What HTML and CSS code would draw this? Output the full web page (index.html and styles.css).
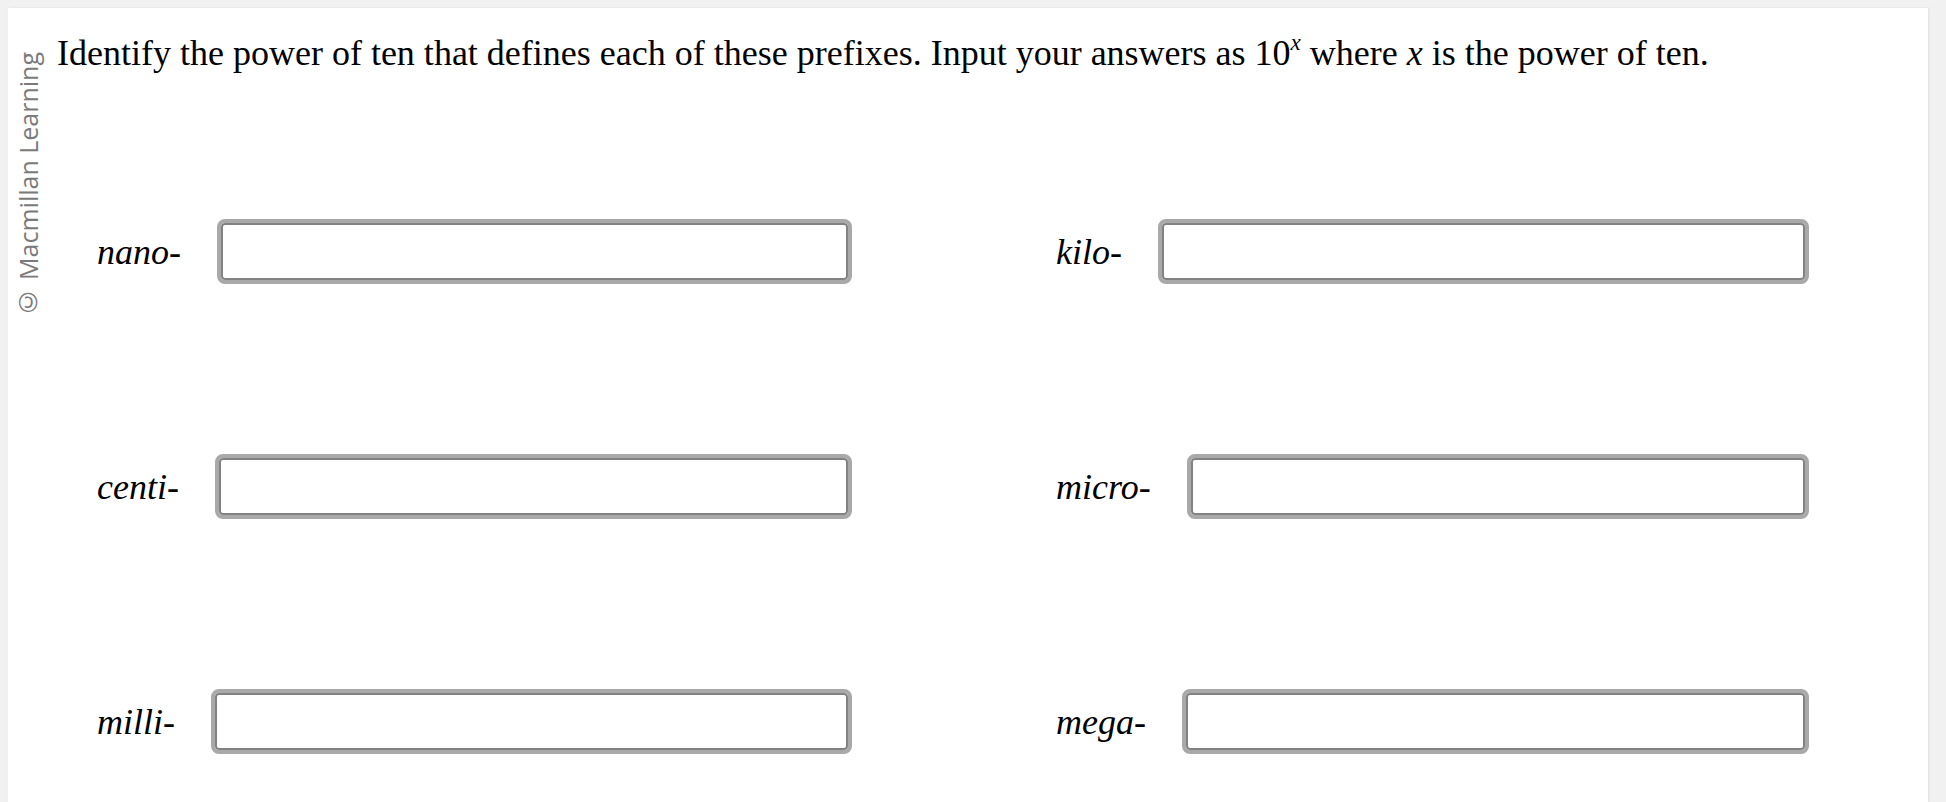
FILE: index.html
```html
<!DOCTYPE html>
<html lang="en">
<head>
<meta charset="utf-8">
<title>Power of ten prefixes</title>
<link rel="stylesheet" href="styles.css">
</head>
<body>
<div class="panel">
  <div class="brand"><span class="brand-text">© Macmillan Learning</span></div>
  <div class="content">
    <p class="question">Identify the power of ten that defines each of these prefixes. Input your answers as 10<sup class="sup">x</sup> where <i>x</i> is the power of ten.</p>
    <div class="grid">
      <label class="row"><span class="label">nano-</span><input class="answer" type="text"></label>
      <label class="row"><span class="label">kilo-</span><input class="answer" type="text"></label>
      <label class="row"><span class="label">centi-</span><input class="answer" type="text"></label>
      <label class="row"><span class="label">micro-</span><input class="answer" type="text"></label>
      <label class="row"><span class="label">milli-</span><input class="answer" type="text"></label>
      <label class="row"><span class="label">mega-</span><input class="answer" type="text"></label>
    </div>
  </div>
</div>
</body>
</html>
```
FILE: styles.css
```css
html, body {
  margin: 0;
  padding: 0;
  height: 100%;
  overflow: hidden;
}
body {
  background: #f1f1f1;
  font-family: "Liberation Serif", "Times New Roman", serif;
  color: #000;
}
.panel {
  display: flex;
  margin: 8px 18px 0 8px;
  height: 794px;
  background: #fff;
  box-shadow: 1px 0 2px rgba(0,0,0,0.08);
}
.brand {
  width: 40px;
  flex: none;
  padding-top: 44px;
  display: flex;
  justify-content: center;
  align-items: flex-start;
}
.brand-text {
  writing-mode: vertical-rl;
  transform: rotate(180deg);
  font-family: "Open Sans", sans-serif;
  font-size: 25px;
  color: #7a7a7a;
  white-space: nowrap;
  line-height: 1;
}
.content {
  flex: 1;
  padding-left: 9px;
}
.question {
  margin: 25px 0 0 0;
  font-size: 36px;
  line-height: 40px;
  white-space: nowrap;
}
.sup {
  font-style: italic;
  font-size: 23px;
  vertical-align: 0;
  position: relative;
  top: -15px;
}
.grid {
  display: grid;
  grid-template-columns: 755px 753px;
  column-gap: 204px;
  row-gap: 170px;
  margin-top: 141px;
  margin-left: 40px;
}
.row {
  display: flex;
  align-items: center;
  gap: 36px;
  height: 65px;
}
.label {
  font-style: italic;
  font-size: 36px;
  flex: none;
}
.answer {
  flex: 1;
  min-width: 0;
  height: 65px;
  box-sizing: border-box;
  border: 4px solid #a9a9a9;
  border-radius: 8px;
  box-shadow: inset 0 0 0 2px #828282;
  background: #fff;
  outline: none;
  margin: 0;
  padding: 0 8px;
  font-size: 30px;
  font-family: inherit;
}
```
